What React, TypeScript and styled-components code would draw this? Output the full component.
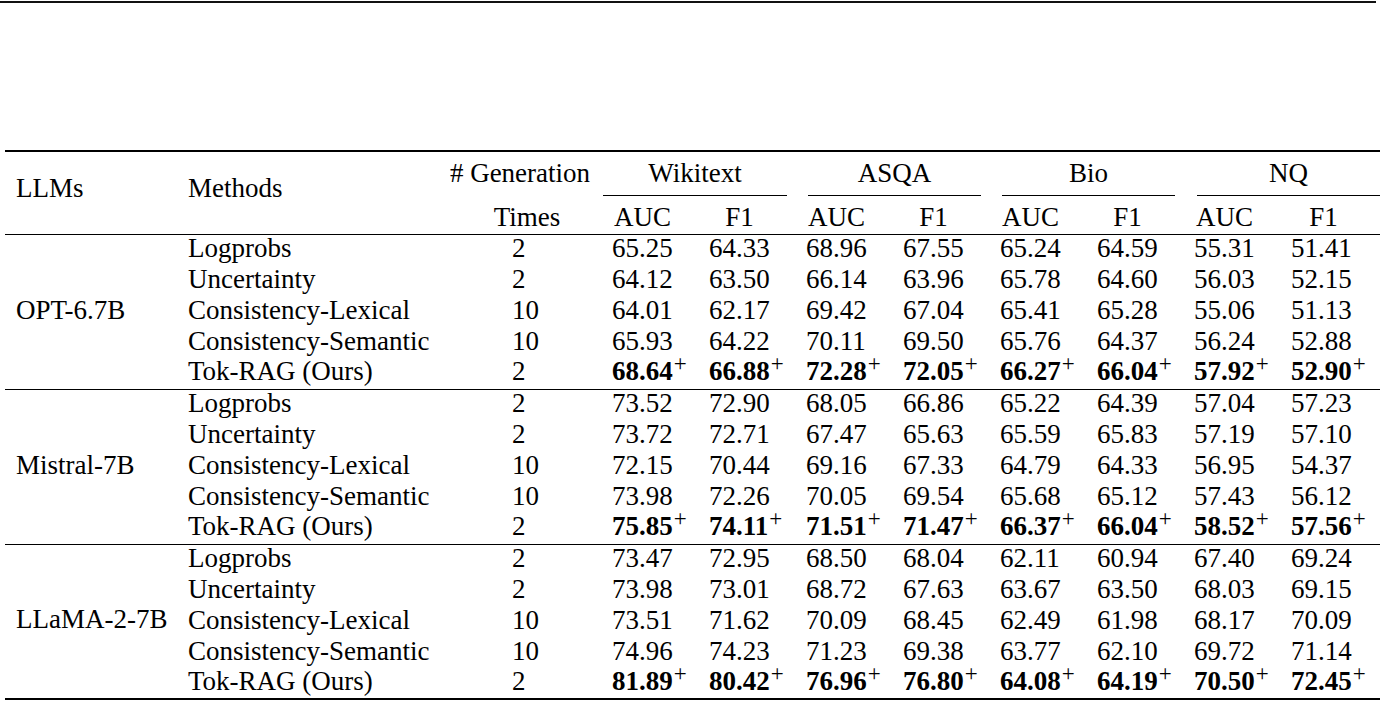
import React from 'react'
import styled, { createGlobalStyle } from 'styled-components'

const GlobalStyle = createGlobalStyle`
  body {
    margin: 0;
    background: #fff;
    color: #000;
    font-family: "Liberation Serif", "Times New Roman", serif;
  }
`

const TopRule = styled.div`
  height: 2px;
  margin: 1px 7px 0 0;
  background: #111;
`

const Table = styled.table`
  margin: 147px 0 0 5px;
  width: 1375px;
  table-layout: fixed;
  border-collapse: collapse;
  font-size: 27px;
  border-bottom: 2px solid #000;
`

const Head = styled.thead`
  border-top: 2px solid #000;
  line-height: 30px;
`

const Body = styled.tbody`
  border-top: 1px solid #000;
  line-height: 26px;
`

const Row = styled.tr<{ $h: number }>`
  height: ${(p) => p.$h}px;
`

const HeadCell = styled.th<{ $align?: 'left' | 'center'; $pad?: string; $valign?: string }>`
  font-weight: 400;
  padding: ${(p) => p.$pad || '0'};
  text-align: ${(p) => p.$align || 'center'};
  vertical-align: ${(p) => p.$valign || 'bottom'};
  white-space: nowrap;
`

const GroupCell = styled.th`
  font-weight: 400;
  padding: 0;
  vertical-align: bottom;
`

const GroupRule = styled.div<{ $l: number; $r: number }>`
  margin: 0 ${(p) => p.$r}px 0 ${(p) => p.$l}px;
  padding-bottom: 7px;
  border-bottom: 1px solid #000;
  text-align: center;
`

const ModelCell = styled.td`
  padding: 0 0 4px 11px;
  vertical-align: middle;
  white-space: nowrap;
`

const MethodCell = styled.td`
  padding: 0 0 4px 10px;
  white-space: nowrap;
`

const TimesCell = styled.td`
  padding: 0 0 4px 72px;
`

const ValueCell = styled.td`
  padding: 0 0 4px 12px;
  white-space: nowrap;
`

const Best = styled.b`
  font-weight: 700;
`

const Plus = styled.span`
  font-weight: 400;
  font-size: 23px;
  line-height: 0;
  position: relative;
  top: -9px;
  margin-left: 1px;
`

type DataRow = { method: string; times: string; values: string[]; best?: boolean }
type Group = { model: string; rows: DataRow[] }

const groups: Group[] = [
  {
    model: 'OPT-6.7B',
    rows: [
      { method: 'Logprobs', times: '2', values: ['65.25', '64.33', '68.96', '67.55', '65.24', '64.59', '55.31', '51.41'] },
      { method: 'Uncertainty', times: '2', values: ['64.12', '63.50', '66.14', '63.96', '65.78', '64.60', '56.03', '52.15'] },
      { method: 'Consistency-Lexical', times: '10', values: ['64.01', '62.17', '69.42', '67.04', '65.41', '65.28', '55.06', '51.13'] },
      { method: 'Consistency-Semantic', times: '10', values: ['65.93', '64.22', '70.11', '69.50', '65.76', '64.37', '56.24', '52.88'] },
      { method: 'Tok-RAG (Ours)', times: '2', best: true, values: ['68.64', '66.88', '72.28', '72.05', '66.27', '66.04', '57.92', '52.90'] },
    ],
  },
  {
    model: 'Mistral-7B',
    rows: [
      { method: 'Logprobs', times: '2', values: ['73.52', '72.90', '68.05', '66.86', '65.22', '64.39', '57.04', '57.23'] },
      { method: 'Uncertainty', times: '2', values: ['73.72', '72.71', '67.47', '65.63', '65.59', '65.83', '57.19', '57.10'] },
      { method: 'Consistency-Lexical', times: '10', values: ['72.15', '70.44', '69.16', '67.33', '64.79', '64.33', '56.95', '54.37'] },
      { method: 'Consistency-Semantic', times: '10', values: ['73.98', '72.26', '70.05', '69.54', '65.68', '65.12', '57.43', '56.12'] },
      { method: 'Tok-RAG (Ours)', times: '2', best: true, values: ['75.85', '74.11', '71.51', '71.47', '66.37', '66.04', '58.52', '57.56'] },
    ],
  },
  {
    model: 'LLaMA-2-7B',
    rows: [
      { method: 'Logprobs', times: '2', values: ['73.47', '72.95', '68.50', '68.04', '62.11', '60.94', '67.40', '69.24'] },
      { method: 'Uncertainty', times: '2', values: ['73.98', '73.01', '68.72', '67.63', '63.67', '63.50', '68.03', '69.15'] },
      { method: 'Consistency-Lexical', times: '10', values: ['73.51', '71.62', '70.09', '68.45', '62.49', '61.98', '68.17', '70.09'] },
      { method: 'Consistency-Semantic', times: '10', values: ['74.96', '74.23', '71.23', '69.38', '63.77', '62.10', '69.72', '71.14'] },
      { method: 'Tok-RAG (Ours)', times: '2', best: true, values: ['81.89', '80.42', '76.96', '76.80', '64.08', '64.19', '70.50', '72.45'] },
    ],
  },
]

// dataset name + cmidrule trims (left, right)
const datasets: [string, number, number][] = [
  ['Wikitext', 3, 7],
  ['ASQA', 14, 7],
  ['Bio', 14, 7],
  ['NQ', 15, 0],
]

const widths = [173, 262, 160, 97, 97, 97, 97, 97, 97, 97, 101]

export default function App() {
  return (
    <>
      <GlobalStyle />
      <TopRule />
      <Table>
        <colgroup>
          {widths.map((w, i) => (
            <col key={i} style={{ width: w }} />
          ))}
        </colgroup>
        <Head>
          <Row $h={45}>
            <HeadCell rowSpan={2} $align="left" $valign="top" $pad="21px 0 0 11px">
              LLMs
            </HeadCell>
            <HeadCell rowSpan={2} $align="left" $valign="top" $pad="21px 0 0 10px">
              Methods
            </HeadCell>
            <HeadCell $pad="0 0 8px 0">
              # Generation
            </HeadCell>
            {datasets.map(([name, l, r]) => (
              <GroupCell key={name} colSpan={2}>
                <GroupRule $l={l} $r={r}>{name}</GroupRule>
              </GroupCell>
            ))}
          </Row>
          <Row $h={38}>
            <HeadCell $pad="0 0 2px 14px">Times</HeadCell>
            {datasets.map(([name]) => (
              <React.Fragment key={name}>
                <HeadCell $pad="0 24px 2px 12px">AUC</HeadCell>
                <HeadCell $pad="0 24px 2px 12px">F1</HeadCell>
              </React.Fragment>
            ))}
          </Row>
        </Head>
        {groups.map((g) => (
          <Body key={g.model}>
            {g.rows.map((r, i) => (
              <Row $h={31} key={r.method}>
                {i === 0 && <ModelCell rowSpan={g.rows.length}>{g.model}</ModelCell>}
                <MethodCell>{r.method}</MethodCell>
                <TimesCell>{r.times}</TimesCell>
                {r.values.map((v, j) => (
                  <ValueCell key={j}>
                    {r.best ? (
                      <>
                        <Best>{v}</Best>
                        <Plus>+</Plus>
                      </>
                    ) : (
                      v
                    )}
                  </ValueCell>
                ))}
              </Row>
            ))}
          </Body>
        ))}
      </Table>
    </>
  )
}
